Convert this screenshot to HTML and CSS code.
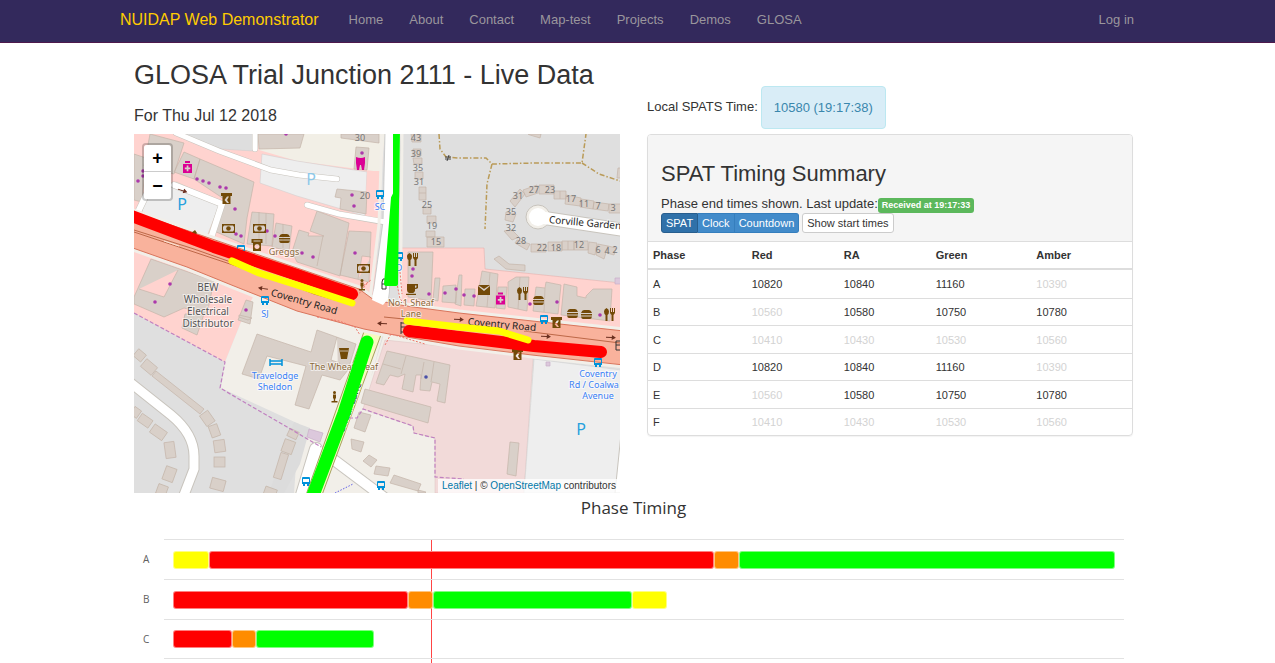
FILE: index.html
```html
<!DOCTYPE html>
<html lang="en">
<head>
<meta charset="UTF-8">
<meta name="viewport" content="width=device-width, initial-scale=1">
<title>GLOSA Trial Junction 2111</title>
<link rel="stylesheet" href="styles.css">
</head>
<body>
<header class="navbar">
  <nav class="container navbar-inner">
    <a class="brand" href="#">NUIDAP Web Demonstrator</a>
    <ul class="nav">
      <li><a href="#">Home</a></li>
      <li><a href="#">About</a></li>
      <li><a href="#">Contact</a></li>
      <li><a href="#">Map-test</a></li>
      <li><a href="#">Projects</a></li>
      <li><a href="#">Demos</a></li>
      <li><a href="#">GLOSA</a></li>
    </ul>
    <a class="login" href="#">Log in</a>
  </nav>
</header>

<main class="page">
<div class="container content">
  <div class="row">
    <section class="col">
      <div class="col-head">
        <h1>GLOSA Trial Junction 2111 - Live Data</h1>
        <h2 class="date">For Thu Jul 12 2018</h2>
      </div>
      <div class="map">
        <svg class="map-canvas" viewBox="0 0 486 359" preserveAspectRatio="xMidYMid slice">
          <defs>
            <symbol id="bus" viewBox="0 0 8 9"><path fill="#0092da" fill-rule="evenodd" d="M1 0h6q1 0 1 1v6H7v2H5V7H3v2H1V7H0V1q0-1 1-1zM1 2v3h6V2z"/></symbol>
            <symbol id="money" viewBox="0 0 13 9"><path fill="#734a08" fill-rule="evenodd" d="M0 0h13v9H0zM2 1.500L1 3v3l1 1.500h9L12 6V3l-1-1.500z"/><circle cx="6.500" cy="4.500" r="2.300" fill="#734a08"/></symbol>
            <symbol id="burger" viewBox="0 0 11 9"><path fill="#734a08" d="M0 3Q1 0 3 0h5q2 0 3 3zM0 4h11v1.500H0zM0 6.500h11Q10.500 9 9 9H2Q.5 9 0 6.500z"/></symbol>
            <symbol id="food" viewBox="0 0 11 13"><path fill="#734a08" d="M2.500 0Q5 1 5 3.500 5 6 3.500 7v6h-2V7Q0 6 0 3.500 0 1 2.500 0zM6 0h1v4h1V0h1v4h1V0h1v5L9.500 7v6h-2V7L6 5z"/></symbol>
            <symbol id="cup" viewBox="0 0 12 11"><path fill="#734a08" fill-rule="evenodd" d="M1 0h11v4q-1 1-3 1v2q-1 2-2 2H3Q1 8 1 6zm8 1.500V4l1.500-.8V1.500zM0 9.800h10V11H0z"/></symbol>
            <symbol id="atm" viewBox="0 0 11 11"><path fill="#734a08" fill-rule="evenodd" d="M0 0h11v3H9.500v8h-8V3H0zM6 3.500L3.500 7 6 10h2L6 7l2-3.500z"/></symbol>
            <symbol id="shop" viewBox="0 0 11 12"><path fill="#734a08" fill-rule="evenodd" d="M0 0h11v4H9.500v8h-8V4H0zM2 1.500v1h7v-1zM5.500 5a2.500 2.500 0 1 0 .01 0z"/></symbol>
            <symbol id="pharmacy" viewBox="0 0 9 12"><path fill="#db0094" fill-rule="evenodd" d="M2 0h5v2H2zM0 3h9v9H0zM3.700 4.500v2H1.800v1.700h1.900v2h1.700v-2h1.900V6.500H5.400v-2z"/></symbol>
            <symbol id="arrow" viewBox="0 0 12 6"><path fill="#6c3020" d="M0 2.400h7V0l5 3-5 3V3.600H0z"/></symbol>
            <symbol id="person" viewBox="0 0 6 12"><circle cx="3" cy="1.500" r="1.500" fill="#734a08"/><path fill="#734a08" d="M1.500 3.500h3v4H3.700V10H6v1.500H0V10h2.300V7.500h-.8z"/></symbol>
          </defs>

          <!-- land use -->
          <rect width="486" height="359" fill="#dfdfdf"/>
          <path fill="#ffd3cf" d="M0 0H250L240 170 0 90z"/>
          <path fill="#dedede" stroke="#ccc" stroke-width=".5" d="M42 0H119V17L88 15z"/>
          <path fill="#f2efe6" d="M124 0H251L247 38 163 27 125 16z"/>
          <path fill="#eee" stroke="#ccc" stroke-width=".5" d="M128 20L163 27 233 38 231 82 163 62 126 49z"/>
          <path fill="#ffd3cf" d="M233 37H247L244 88 231 85z"/>
          <path fill="#ffd3cf" stroke="#e0aaa6" stroke-width=".5" d="M266 114H350L351 135 487 149V195L266 172z"/>
          <path fill="#ffd3cf" d="M0 113L123 160 109 183 91 228 0 179z"/>
          <path fill="#f2efe9" d="M123 155L250 196 205 359H160L165 290 87 254 91 228 109 183z"/>
          <path fill="#dcdcdc" d="M160 288L176 294 166 330 150 359H135z"/>
          <path fill="#f2efe9" d="M238 240L200 322 180 359H395L399 222 250 200z"/>
          <path fill="#f2dad9" stroke="#dcc0c0" stroke-width=".5" d="M251 206L325 214 399 224 390 359H301V304L280 299 279 292 229 275z"/>
          <path fill="#eee" stroke="#ccc" stroke-width=".5" d="M400 225L487 236V359H390z"/>
          <path fill="#eee" stroke="#d9c9b5" stroke-width=".5" d="M13 52L43 48 86 69 72 105 8 78z"/>

          <!-- buildings -->
          <g fill="#d9d0c9" stroke="#c4b5a9" stroke-width=".7">
            <path d="M16 0L50 9 40 40 10 32zM50 18L66 25 60 45 40 38zM66 25L120 48 113 84 110 110 80 97 90 65 60 45zM0 20L12 24 8 68 0 66zM118 78L140 80 138 112 113 110zM125 78V110M132 79V110M142 89L158 92 155 117 138 113zM149 90V114M124 0H170L166 14 125 15z"/>
            <path d="M17 125L80 147 73 180 50 174 30 183 0 170 0 163zM5 155L30 163 44 136M112 166L119 168 116 190 104 186zM51 180L70 180 63 201 48 194z"/>
            <path d="M207 0H245V9L207 4zM222 13L235 14 233 36 220 35zM203 55L233 58 232 80 206 75 207 64 201 63zM183 77L215 89 206 142 163 128 158 118 165 96 175 99 174 102 190 102 176 97zM215 97L237 98 235 148 206 141zM189 102L183 132M237 123L228 122 224 145"/>
            <path d="M274 118H299L297 167 274 163zM301 144H306L304 167 299 166zM309 152L322 151V169L308 168zM325 141H328L327 172 321 170zM331 155H341L340 172 330 171zM348 137L364 140 361 174 342 172zM356 139L353 173M364 153H373L371 175 362 174zM374 148L382 143H395L393 177 374 173zM386 143L384 175M402 153L411 154 412 148 427 151 424 180 399 177zM411 154L410 178M430 150L443 153V162L452 164V162L459 155H478L476 187 427 181z"/>
            <path d="M360 125L365 122 375 130 391 131V137L372 135zM394 0L407 0 406 4 396 1z"/>
            <path d="M277 0H287V8H278zM279 15H287V22H279zM279 24H288V30H280zM281 38H289V45H281zM285 53H292V66H285zM285 59H292M289 73H297V80H289zM293 82H302V89H293zM292 97H301V103H292zM293 103H310V113H293z"/>
            <path d="M376 67L386 55 391 60 381 73zM389 56L403 51 404 59 392 63zM405 51H420V60H405zM420 57H432V65H420zM426 57V65M432 61L447 64 446 72 431 70zM447 65L460 67 459 75 446 73zM460 68L475 70 474 77 459 75zM475 70H487V79H475zM372 78L382 80 379 88 371 86zM370 97L378 96 385 103 378 106zM383 106L396 110 393 116 381 109zM397 110H412V118H397zM414 108H428V117H414zM428 107H440V116H428zM434 107V116M440 107H454V116H440zM455 108L463 109 461 121 454 119zM464 110L474 112 470 125 462 121zM474 112L482 114 480 121 473 119zM484 34H487V44H483z"/>
            <path d="M22 237L70 275 66 280 18 242z"/>
            <rect x="1" y="217" width="10" height="9" transform="rotate(40 6 221)"/>
            <rect x="8" y="228" width="14" height="10" transform="rotate(40 15 233)"/>
            <rect x="68" y="278" width="10" height="13" transform="rotate(-35 73 284)"/>
            <rect x="76" y="291" width="9" height="12" transform="rotate(-20 80 297)"/>
            <rect x="80" y="306" width="11" height="12" transform="rotate(-8 86 312)"/>
            <rect x="80" y="323" width="11" height="10"/>
            <rect x="77" y="345" width="14" height="11" transform="rotate(15 84 350)"/>
            <rect x="-2" y="274" width="8" height="9" transform="rotate(35 2 278)"/>
            <rect x="5" y="282" width="13" height="9" transform="rotate(35 11 286)"/>
            <rect x="17" y="293" width="15" height="10" transform="rotate(35 24 298)"/>
            <rect x="31" y="308" width="10" height="16" transform="rotate(-8 36 316)"/>
            <rect x="30" y="333" width="11" height="14" transform="rotate(20 35 340)"/>
            <rect x="23" y="351" width="10" height="10" transform="rotate(20 28 356)"/>
            <rect x="154" y="296" width="10" height="8" transform="rotate(25 159 300)"/>
            <rect x="149" y="306" width="11" height="13" transform="rotate(20 154 312)"/>
            <rect x="143" y="319" width="8" height="26" transform="rotate(17 147 332)"/>
            <rect x="131" y="354" width="12" height="8" transform="rotate(20 137 356)"/>
            <path d="M105 181L118 184 114 186 105 183zM123 200L177 218 183 196 222 210 214 236 206 246 188 241 175 275 161 271 172 232 133 222 125 245 108 240zM203 203L197 226 206 229 204 236"/>
            <path d="M253 217L316 231 311 269 303 267 306 250 298 248 296 257 286 256 287 241 282 241 279 258 268 255 271 240 264 243 256 241 250 251 242 249zM249 230L267 235M272 222L267 240M290 228L287 245M300 228L297 248M231 255L297 273 294 289 227 269zM225 278L237 281 231 298 220 294zM217 305L230 308 227 318 218 315zM235 321L243 326 237 333 229 327zM242 332L256 334 254 342 240 340zM260 341L287 350 284 357 256 349zM284 356L292 358 291 359H284zM376 308L385 309 382 342 373 340z"/>
            <path fill="#dcc8dc" stroke="#c8b0c8" d="M175 295L189 299 186 308 173 303zM412 228H416V232H412zM481 144H487V150H481z"/>
          </g>

          <!-- minor roads -->
          <g fill="none" stroke="#c8c4bd" stroke-linecap="round">
            <path stroke-width="6" d="M42-1L85 17 137 36 165 41 203 45M121-2V15M173 71L205 80 250 88"/>
            <path stroke-width="7" d="M40 51L88 70 76 107M16 53L4 78"/>
            <path stroke-width="11" d="M-2 250L37 281Q60 300 60 322V335L50 361"/>
            <path stroke-width="14" d="M404 83L490 96M182 315L168 361"/>
            <path stroke-width="12" d="M200 326L252 365"/>
          </g>
          <circle cx="404" cy="83" r="12" fill="#f2efe9" stroke="#c8c4bd"/>
          <path fill="#fff" stroke="#bbb" stroke-width=".7" d="M251-1H267L265 60 254 169 238 167 249 88z"/>
          <g fill="none" stroke="#fff" stroke-linecap="round">
            <path stroke-width="5" d="M42-1L85 17 137 36 165 41 203 45M121-2V15M173 71L205 80 252 88"/>
            <path stroke-width="6" d="M40 51L88 70 76 107M16 53L4 78"/>
            <path stroke-width="9" d="M-2 250L37 281Q60 300 60 322V335L50 361"/>
            <path stroke-width="12" d="M404 83L490 96M182 315L168 361"/>
            <path stroke-width="10" d="M200 326L252 365"/>
          </g>
          <path fill="#fff" stroke="#c8c4bd" d="M487 300L481 359H487z"/>
          <circle cx="404" cy="83" r="9" fill="#fff"/>
          <path fill="none" stroke="#f2efe9" stroke-width="3" d="M248 0L245 90 236 165M268 0L267 110 266 170"/>
          <path fill="#f7fabf" stroke="#a5a05c" d="M232 192L248 198 188 361H172z"/>

          <!-- Coventry Road -->
          <path fill="#f9b29c" stroke="#f2efe9" stroke-width="7" d="M-4 77L163 134 225 155 240 166 272 172 325 179 490 197V231L398 221 325 212 255 200 230 195 163 177 100 152 53 133-4 113z"/>
          <path fill="#f9b29c" stroke="#d9755c" d="M-4 77L163 134 225 155 240 166 272 172 325 179 490 197V231L398 221 325 212 255 200 230 195 163 177 100 152 53 133-4 113z"/>
          <path fill="#fff" d="M240 155H255L254 165 249 171 238 166z"/>
          <path fill="none" stroke="#bd6848" d="M0 96L60 115 125 138 180 160 215 170M250 183L270 185M390 197L486 209M0 98L60 118 120 138"/>
          <path fill="none" stroke="#fbe5d5" stroke-width="1" d="M30 107L45 112"/>
          <path fill="none" stroke="#ed776a" stroke-dasharray="2 1.500" d="M221 158L237 146M221 165L234 148M183 183L205 187 221 193 226 201M251 211L257 200 291 210M262 145L266 165 274 172M266 138L268 160"/>
          <path fill="none" stroke="#c080c0" stroke-width="1.200" stroke-dasharray="4 2" d="M0 179L91 228 86 254 165 300 187 313M215 284H223L229 275 279 292 280 299 301 304V343L330 345"/>
          <path fill="none" stroke="#6060e8" stroke-dasharray="1.500 1.500" d="M201 359L219 350"/>
          <path fill="none" stroke="#ba9b58" stroke-width="1.500" stroke-dasharray="5 2 1.500 2" d="M305 0L306 15 312 23 325 24H352L358 30 400 29H448L452 0M358 30L353 50 351 95M448 29L465 40 486 47"/>
          <path fill="none" stroke="#444" d="M311 23H317M311 25H317M313 27L315 21"/>

          <!-- points of interest -->
          <g fill="#ac39ac">
            <circle cx="63" cy="45" r="1.800"/><circle cx="69" cy="47" r="1.800"/><circle cx="75" cy="49" r="1.800"/><circle cx="86" cy="53" r="1.800"/><circle cx="92" cy="54" r="1.800"/><circle cx="101" cy="75" r="1.800"/><circle cx="102" cy="100" r="1.800"/><circle cx="107" cy="102" r="1.800"/><circle cx="133" cy="97" r="1.800"/><circle cx="141" cy="102" r="1.800"/><circle cx="36" cy="150" r="1.800"/><circle cx="21" cy="168" r="1.800"/><circle cx="112" cy="176" r="1.800"/><circle cx="4" cy="47" r="1.800"/><circle cx="9" cy="37" r="1.800"/><circle cx="9" cy="42" r="1.800"/><circle cx="152" cy="0" r="1.800"/>
            <circle cx="228" cy="19" r="1.800"/><circle cx="218" cy="61" r="1.800"/><circle cx="220" cy="72" r="1.800"/><circle cx="168" cy="119" r="1.800"/><circle cx="179" cy="123" r="1.800"/><circle cx="221" cy="119" r="1.800"/><circle cx="279" cy="135" r="1.800"/><circle cx="278" cy="142" r="1.800"/><circle cx="295" cy="160" r="1.800"/><circle cx="311" cy="159" r="1.800"/><circle cx="322" cy="155" r="1.800"/><circle cx="330" cy="161" r="1.800"/><circle cx="340" cy="162" r="1.800"/><circle cx="396" cy="170" r="1.800"/><circle cx="423" cy="168" r="1.800"/><circle cx="466" cy="181" r="1.800"/>
            <circle cx="292" cy="243" r="1.800" fill="#4a50a8"/>
          </g>
          <use href="#pharmacy" x="49" y="27" width="9" height="12"/>
          <use href="#pharmacy" x="362" y="158" width="9" height="13"/>
          <path fill="#db0094" d="M222 23q5 2 9 0v6l-1 7h-2l-1-5h-1l-1 5h-2l-1-7z"/>
          <use href="#atm" x="87" y="59" width="11" height="11"/>
          <use href="#atm" x="417" y="183" width="11" height="11"/>
          <use href="#atm" x="378" y="215" width="11" height="11"/>
          <use href="#money" x="88" y="90" width="13" height="9"/>
          <use href="#money" x="119" y="90" width="13" height="9"/>
          <use href="#money" x="223" y="130" width="13" height="9"/>
          <use href="#shop" x="117" y="105" width="12" height="12"/>
          <use href="#burger" x="145" y="100" width="11" height="9"/>
          <use href="#burger" x="399" y="162" width="11" height="9"/>
          <use href="#burger" x="433" y="175" width="11" height="9"/>
          <use href="#burger" x="447" y="176" width="11" height="9"/>
          <use href="#food" x="273" y="119" width="11" height="13"/>
          <use href="#food" x="383" y="153" width="11" height="13"/>
          <use href="#food" x="470" y="174" width="11" height="13"/>
          <use href="#cup" x="272" y="150" width="12" height="11"/>
          <use href="#person" x="225" y="145" width="6" height="12"/>
          <use href="#person" x="197" y="257" width="7" height="12"/>
          <path fill="#734a08" d="M344 152L350 157 356 152V161H344zM344 151H356L350 155zM205 214H215L213 225H207zM56 100L61 96 63 99 60 102z"/>
          <path fill="none" stroke="#d9d0c9" stroke-width=".8" d="M206 217H214"/>
          <use href="#bus" x="103" y="111" width="8" height="9"/>
          <use href="#bus" x="127" y="162" width="8" height="9"/>
          <use href="#bus" x="242" y="56" width="8" height="9"/>
          <use href="#bus" x="261" y="118" width="8" height="9"/>
          <use href="#bus" x="406" y="181" width="8" height="9"/>
          <use href="#bus" x="460" y="224" width="8" height="9"/>
          <use href="#bus" x="168" y="343" width="8" height="9"/>
          <use href="#bus" x="243" y="347" width="8" height="9"/>
          <path fill="none" stroke="#0092da" stroke-width="1.500" d="M136 225V232M148 225V232M136 230H148M136 227H148"/>
          <use href="#arrow" x="43" y="54" width="11" height="5" transform="rotate(18 48 57)"/>
          <use href="#arrow" x="123" y="151" width="12" height="5" transform="rotate(188 129 154)"/>
          <use href="#arrow" x="242" y="188" width="12" height="5" transform="rotate(184 248 190)"/>
          <use href="#arrow" x="319" y="183" width="12" height="5" transform="rotate(4 325 185)"/>
          <use href="#arrow" x="406" y="200" width="12" height="5" transform="rotate(4 412 202)"/>
          <use href="#arrow" x="471" y="201" width="12" height="5" transform="rotate(4 477 203)"/>
          <path fill="none" stroke="#333" d="M267 189H271M267 193H271M267 198H271M267 188V200M486 207H482V216H486M482 211H486M249 145H252V155H248V148zM248 150H252"/>

          <g class="map-text">
            <text class="parking" x="48" y="76">P</text>
            <text class="parking faint" x="177" y="51">P</text>
            <text class="parking" x="447" y="301">P</text>
            <g class="house">
              <text x="226" y="7">30</text><text x="231" y="65">20</text><text x="282" y="7">43</text><text x="282" y="23">39</text><text x="284" y="37">35</text><text x="285" y="51">31</text><text x="293" y="74">25</text><text x="298" y="95">19</text><text x="302" y="111">15</text>
              <text x="400" y="59">27</text><text x="416" y="59">23</text><text x="384" y="65">31</text><text x="437" y="68">17</text><text x="450" y="73">11</text><text x="464" y="75">7</text><text x="479" y="77">3</text><text x="377" y="81">35</text><text x="377" y="97">32</text><text x="387" y="110">28</text><text x="408" y="117">22</text><text x="422" y="117">18</text><text x="445" y="114">12</text><text x="464" y="119">6</text><text x="473" y="120">4</text><text x="481" y="119">2</text>
            </g>
            <text class="food" x="150" y="121">Greggs</text>
            <g class="place">
              <text x="74" y="157">BEW</text>
              <text x="74" y="169">Wholesale</text>
              <text x="74" y="181">Electrical</text>
              <text x="74" y="193">Distributor</text>
            </g>
            <text class="transit" x="131" y="183">SJ</text>
            <text class="transit" x="246" y="76">SC</text>
            <text class="transit" x="265" y="137">D</text>
            <text class="food" x="277" y="172">No·1 Sheaf</text>
            <text class="food" x="277" y="183">Lane</text>
            <text class="food" x="210" y="236">The Wheatsheaf</text>
            <text class="transit" x="141" y="245">Travelodge</text>
            <text class="transit" x="141" y="256">Sheldon</text>
            <text class="transit" x="464" y="243">Coventry</text>
            <text class="transit" x="460" y="254">Rd / Coalwa</text>
            <text class="transit" x="464" y="265">Avenue</text>
            <text class="street main" x="170" y="171" transform="rotate(16 170 168)">Coventry Road</text>
            <text class="street main" x="368" y="194" transform="rotate(5 368 190)">Coventry Road</text>
            <text class="street start" x="415" y="89" transform="rotate(5 415 86)">Corville Garden</text>
            <text class="street" x="216" y="276" transform="rotate(-70 216 273)">Sheaf Lane</text>
          </g>

          <!-- signal approaches, coloured by current phase -->
          <g fill="none" stroke-linecap="round" stroke-linejoin="round">
            <path stroke="red" stroke-width="12" d="M-5 81L80 113 163 141 218 160"/>
            <path stroke="#ff0" stroke-width="7" d="M98 127L125 139 163 151 218 169"/>
            <path stroke="red" stroke-width="12" d="M275 197L325 203 400 212 467 218"/>
            <path stroke="#ff0" stroke-width="7" d="M273 187L325 193 365 197 394 206"/>
            <path stroke="lime" stroke-width="13" d="M233 208L210 279 178 364"/>
            <path fill="lime" stroke="lime" stroke-width="4" d="M261-4H264L262 150H252L259 64 261 60z"/>
          </g>
        </svg>
        <div class="map-zoom">
          <button type="button" aria-label="Zoom in">+</button>
          <button type="button" aria-label="Zoom out">−</button>
        </div>
        <div class="map-credit"><a href="#">Leaflet</a> | © <a href="#">OpenStreetMap</a> contributors</div>
      </div>
    </section>

    <section class="col">
      <div class="col-head time-row">
        <span>Local SPATS Time:</span>
        <div class="alert">10580 (19:17:38)</div>
      </div>
      <div class="panel">
        <div class="panel-heading">
          <h2>SPAT Timing Summary</h2>
          <p>Phase end times shown. Last update:<span class="label">Received at 19:17:33</span></p>
          <div class="toolbar">
            <div class="btn-group">
              <button type="button" class="btn primary active">SPAT</button>
              <button type="button" class="btn primary">Clock</button>
              <button type="button" class="btn primary">Countdown</button>
            </div>
            <button type="button" class="btn">Show start times</button>
          </div>
        </div>
        <table class="phases">
          <thead>
            <tr><th>Phase</th><th>Red</th><th>RA</th><th>Green</th><th>Amber</th></tr>
          </thead>
          <tbody>
            <tr><td>A</td><td>10820</td><td>10840</td><td>11160</td><td class="past">10390</td></tr>
            <tr><td>B</td><td class="past">10560</td><td>10580</td><td>10750</td><td>10780</td></tr>
            <tr><td>C</td><td class="past">10410</td><td class="past">10430</td><td class="past">10530</td><td class="past">10560</td></tr>
            <tr><td>D</td><td>10820</td><td>10840</td><td>11160</td><td class="past">10390</td></tr>
            <tr><td>E</td><td class="past">10560</td><td>10580</td><td>10750</td><td>10780</td></tr>
            <tr><td>F</td><td class="past">10410</td><td class="past">10430</td><td class="past">10530</td><td class="past">10560</td></tr>
          </tbody>
        </table>
      </div>
    </section>
  </div>

  <section class="chart">
    <h3>Phase Timing</h3>
    <div class="plot">
      <div class="now-line"></div>
      <div class="phase-row">
        <span class="phase-name">A</span>
        <div class="track">
          <div class="bar amber" style="width:3.8%"></div>
          <div class="bar red" style="width:53.1%"></div>
          <div class="bar red-amber" style="width:2.6%"></div>
          <div class="bar green" style="width:39.6%"></div>
        </div>
      </div>
      <div class="phase-row">
        <span class="phase-name">B</span>
        <div class="track">
          <div class="bar red" style="width:24.7%"></div>
          <div class="bar red-amber" style="width:2.6%"></div>
          <div class="bar green" style="width:21%"></div>
          <div class="bar amber" style="width:3.7%"></div>
        </div>
      </div>
      <div class="phase-row">
        <span class="phase-name">C</span>
        <div class="track">
          <div class="bar red" style="width:6.2%"></div>
          <div class="bar red-amber" style="width:2.5%"></div>
          <div class="bar green" style="width:12.4%"></div>
        </div>
      </div>
    </div>
  </section>
</div>
</main>
</body>
</html>
```

FILE: styles.css
```css
* { box-sizing: border-box; }

body {
  margin: 0;
  font-family: "Liberation Sans", Arial, sans-serif;
  font-size: 13px;
  line-height: 18px;
  color: #333;
  background: #fff;
}

h1, h2, h3, p, ul { margin: 0; padding: 0; font-weight: normal; }
a { text-decoration: none; }
button { font-family: inherit; cursor: pointer; }

.navbar {
  background: #33295c;
  border-bottom: 1px solid #4e1a4c;
}
.navbar, .page { padding-right: 8px; }

.container {
  max-width: 1027px;
  margin: 0 auto;
}

.navbar-inner {
  display: flex;
  align-items: center;
  height: 42px;
  padding-bottom: 3px;
}

.brand { color: #fc0; font-size: 16px; margin-right: 17px; }
.nav { display: flex; list-style: none; }
.nav a, .login { color: #9a969c; padding: 0 13px; }
.nav a { display: block; }
.login { margin-left: auto; }

.content { padding: 0 14px; }

.row { display: flex; gap: 27px; }
.col { flex: 1; min-width: 0; }
.col-head { height: 91px; }

h1 { font-size: 27px; line-height: 30px; padding-top: 17px; }
.date { font-size: 16px; line-height: 20px; margin-top: 16px; }

/* map */
.map {
  position: relative;
  overflow: hidden;
  background: #ddd;
}
.map-canvas { display: block; width: 100%; }

.map-zoom {
  position: absolute;
  top: 9px;
  left: 8px;
  border: 2px solid rgba(0,0,0,0.2);
  border-radius: 4px;
  background-clip: padding-box;
}
.map-zoom button {
  display: block;
  width: 27px;
  height: 27px;
  padding: 0;
  border: 0;
  background: #fff;
  color: #000;
  font-size: 18px;
  line-height: 26px;
  font-weight: bold;
}
.map-zoom button:first-child { border-bottom: 1px solid #ccc; border-radius: 3px 3px 0 0; }
.map-zoom button:last-child { border-radius: 0 0 3px 3px; }

.map-credit {
  position: absolute;
  right: 0;
  bottom: 0;
  padding: 0 4px;
  background: rgba(255,255,255,0.75);
  font-size: 10px;
  line-height: 14px;
}
.map-credit a { color: #0078a8; }

.map-text {
  font-family: "Noto Sans", sans-serif;
  font-size: 9px;
  text-anchor: middle;
  fill: #555;
  stroke: rgba(255,255,255,0.6);
  stroke-width: 2px;
  paint-order: stroke;
}
.map-text .house { fill: #777; stroke: none; }
.map-text .place { font-size: 10px; }
.map-text .food { fill: #8a6a3a; }
.map-text .transit { fill: #3a80f5; }
.map-text .parking { fill: #27a0dd; stroke: none; font-size: 16px; }
.map-text .faint { fill: #8cc8ea; }
.map-text .street { fill: #222; font-size: 10px; }
.map-text .main { stroke: #f9b29c; }
.map-text .start { text-anchor: start; }

/* timing summary */
.time-row { display: flex; padding-top: 43px; }
.time-row span { padding: 12px 3px 0 0; }
.alert {
  height: 43px;
  padding: 12px;
  border: 1px solid #bce8f1;
  border-radius: 4px;
  background: #d9edf7;
  color: #3a87ad;
}

.panel {
  border: 1px solid #ddd;
  border-radius: 4px;
  box-shadow: 0 1px 1px rgba(0,0,0,0.05);
}
.panel-heading {
  height: 107px;
  padding: 26px 13px 0;
  background: #f5f5f5;
  border-bottom: 1px solid #ddd;
  border-radius: 3px 3px 0 0;
}
.panel-heading h2 { font-size: 22px; line-height: 26px; margin-bottom: 8px; }

.label {
  display: inline-block;
  padding: 0 4px;
  border-radius: 3px;
  background: #5cb85c;
  color: #fff;
  font-size: 9px;
  line-height: 15px;
  font-weight: bold;
}

.toolbar { display: flex; gap: 3px; }
.btn-group { display: flex; }
.btn {
  height: 20px;
  padding: 0 4px;
  border: 1px solid #ccc;
  border-radius: 3px;
  background: #fff;
  color: #333;
  font-size: 11px;
  line-height: 16px;
}
.primary { background: #428bca; border-color: #357ebd; color: #fff; }
.primary.active { background: #3071a9; border-color: #285e8e; }
.btn-group .btn { border-radius: 0; }
.btn-group .btn + .btn { border-left: 0; }
.btn-group .btn:first-child { border-radius: 3px 0 0 3px; }
.btn-group .btn:last-child { border-radius: 0 3px 3px 0; }

.phases {
  width: 100%;
  table-layout: fixed;
  border-collapse: separate;
  border-spacing: 0;
  font-size: 11px;
  line-height: 16px;
}
.phases th, .phases td { padding: 0 5px; text-align: left; height: 28px; }
.phases th:nth-child(1) { width: 20.4%; }
.phases th:nth-child(2), .phases th:nth-child(3) { width: 19%; }
.phases th { border-bottom: 2px solid #ddd; }
.phases tr:nth-child(even) td { height: 27px; }
.phases tbody tr + tr td { border-top: 1px solid #ddd; }
.phases .past { color: #d3d3d3; }

/* phase timing chart */
.chart h3 {
  padding-top: 3px;
  font-family: "Open Sans", sans-serif;
  font-size: 17px;
  line-height: 24px;
  text-align: center;
}
.plot {
  position: relative;
  z-index: 0;
  margin-top: 19px;
  padding: 0 9px 4px 0;
}
.phase-row { display: flex; align-items: center; height: 40px; }
.phase-name {
  width: 30px;
  padding-left: 9px;
  font-family: "Open Sans", sans-serif;
  font-size: 10px;
  color: #606060;
}
.track {
  flex: 1;
  display: flex;
  align-items: center;
  height: 100%;
  padding-left: 9px;
  border-top: 1px solid #e2e2e2;
}
.phase-row:last-child .track { border-bottom: 1px solid #e2e2e2; }
.bar {
  height: 18px;
  border: 1px solid rgba(255,255,255,0.5);
  border-radius: 3px;
}
.red { background: #f00; }
.red-amber { background: #ff8c00; }
.green { background: #0f0; }
.amber { background: #ff0; }
.now-line {
  position: absolute;
  top: 1px;
  bottom: 0;
  left: 29.7%;
  z-index: -1;
  width: 1px;
  background: #f44;
}
```
